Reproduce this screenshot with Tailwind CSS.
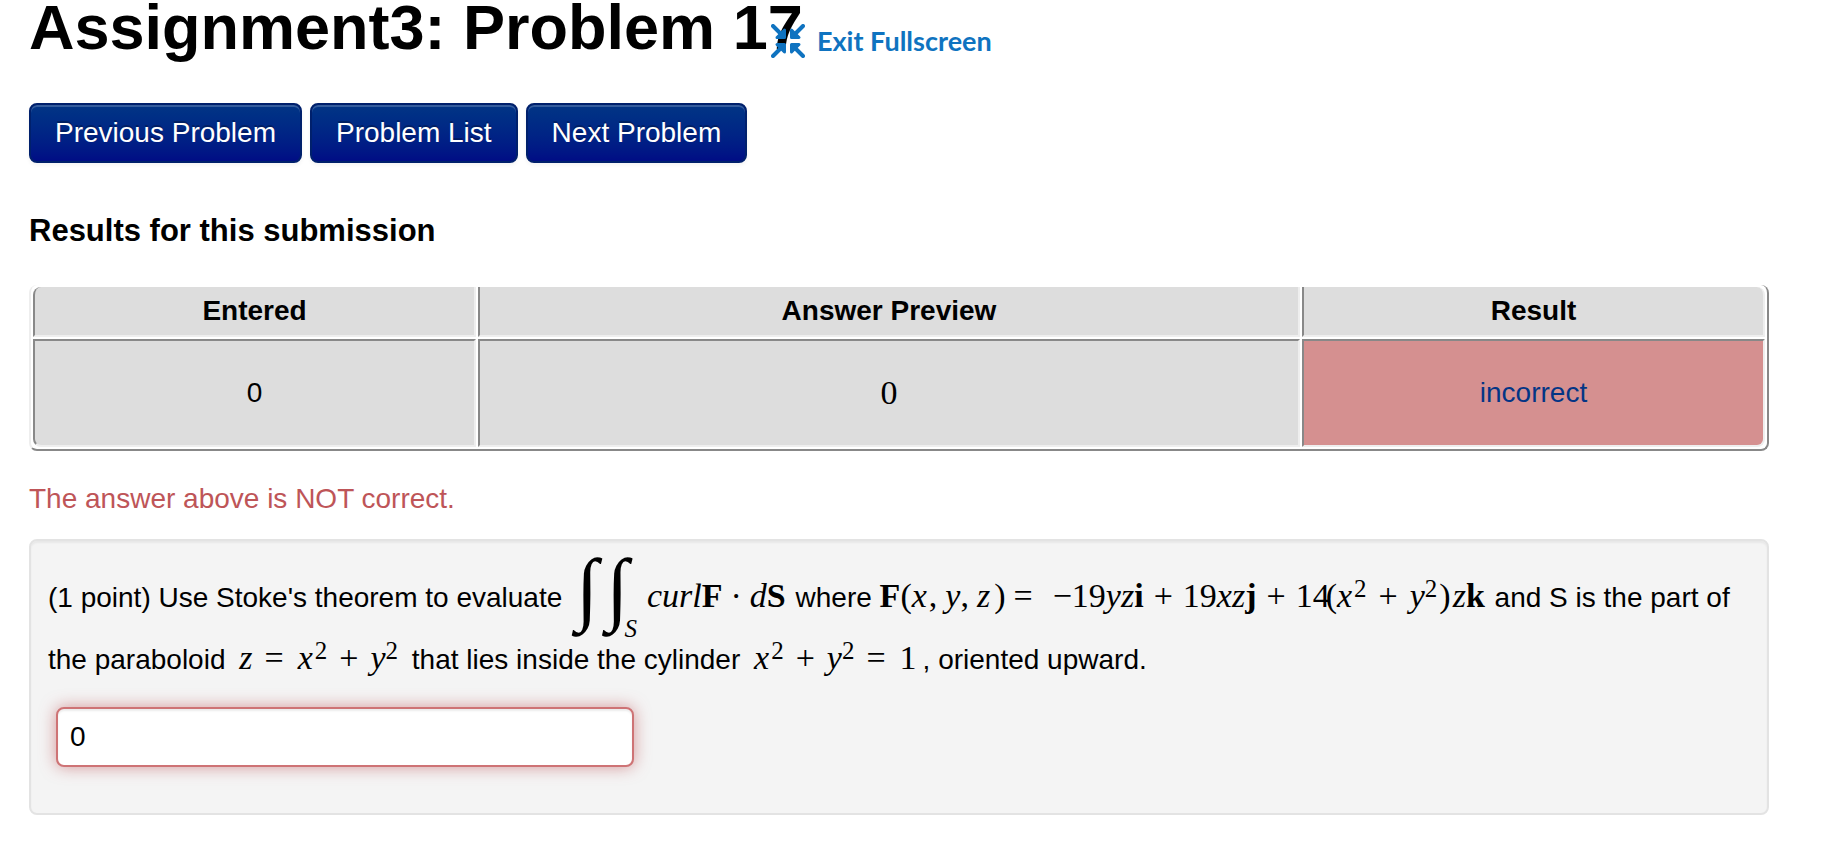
<!DOCTYPE html>
<html lang="en">
<head>
  <meta charset="UTF-8">
  <meta name="viewport" content="width=device-width, initial-scale=1">
  <title>Assignment3: Problem 17</title>
  <script src="https://cdn.jsdelivr.net/npm/@tailwindcss/browser@4"></script>
</head>
<body class="bg-white text-black text-[28px] leading-10 font-['Liberation_Sans',Arial,sans-serif] pl-[29px] pr-[61px]">

  <header class="relative">
    <h1 class="text-[63px] leading-[54px] font-bold whitespace-nowrap">Assignment3: Problem 17</h1>
    <a href="#" class="absolute left-[742px] top-6 flex items-center gap-3 text-[27px] leading-[34px] font-bold text-[#0f73c0] font-[Lato,sans-serif] whitespace-nowrap">
      <svg class="size-[34px]" viewBox="0 0 34 34" fill="currentColor" stroke="currentColor" stroke-linecap="round" stroke-linejoin="round" aria-hidden="true">
        <g id="arrow">
          <path d="M2 2 L9 9" stroke-width="4" fill="none"/>
          <path d="M13.5 6 V13.5 H6 Z" stroke-width="3"/>
        </g>
        <use href="#arrow" transform="rotate(90 17 17)"/>
        <use href="#arrow" transform="rotate(180 17 17)"/>
        <use href="#arrow" transform="rotate(270 17 17)"/>
      </svg>
      Exit Fullscreen
    </a>
  </header>

  <nav class="flex gap-2 mt-[49px] text-white">
    <button type="button" class="border-2 border-[#00206c] rounded-lg px-6 py-2 bg-linear-to-b from-[#033585] to-[#000c85] text-shadow-[0_-2px_0_rgb(0_0_0/0.25)] shadow-[inset_0_2px_0_rgb(255_255_255/0.2),0_2px_4px_rgb(0_0_0/0.05)]">Previous Problem</button>
    <button type="button" class="border-2 border-[#00206c] rounded-lg px-6 py-2 bg-linear-to-b from-[#033585] to-[#000c85] text-shadow-[0_-2px_0_rgb(0_0_0/0.25)] shadow-[inset_0_2px_0_rgb(255_255_255/0.2),0_2px_4px_rgb(0_0_0/0.05)]">Problem List</button>
    <button type="button" class="border-2 border-[#00206c] rounded-lg px-6 py-2 bg-linear-to-b from-[#033585] to-[#000c85] text-shadow-[0_-2px_0_rgb(0_0_0/0.25)] shadow-[inset_0_2px_0_rgb(255_255_255/0.2),0_2px_4px_rgb(0_0_0/0.05)]">Next Problem</button>
  </nav>

  <h2 class="mt-12 text-[31px] font-bold">Results for this submission</h2>

  <table class="mt-[34px] w-full table-fixed border-separate border-spacing-[2px] border-2 border-t-0 border-l-[#eee] border-r-[#888] border-b-[#888] rounded-lg text-center">
    <thead>
      <tr class="h-[50px]">
        <th class="w-[443px] p-0 border-2 border-t-0 border-l-[#888] border-r-[#eee] border-b-[#eee] rounded-tl-lg bg-[#ddd]">Entered</th>
        <th class="p-0 border-2 border-t-0 border-l-[#888] border-r-[#eee] border-b-[#eee] bg-[#ddd]">Answer Preview</th>
        <th class="w-[463px] p-0 border-2 border-t-0 border-l-[#888] border-r-[#eee] border-b-[#eee] rounded-tr-lg bg-[#ddd]">Result</th>
      </tr>
    </thead>
    <tbody>
      <tr class="h-[108px]">
        <td class="p-0 border-2 border-t-[#888] border-l-[#888] border-r-[#eee] border-b-[#eee] rounded-bl-lg bg-[#ddd]">0</td>
        <td class="p-0 border-2 border-t-[#888] border-l-[#888] border-r-[#eee] border-b-[#eee] bg-[#ddd] text-[34px] font-['Liberation_Serif',serif]">0</td>
        <td class="p-0 border-2 border-t-[#888] border-l-[#888] border-r-[#eee] border-b-[#eee] rounded-br-lg bg-[#d59090]"><a href="#" class="text-[#033585]">incorrect</a></td>
      </tr>
    </tbody>
  </table>

  <p class="mt-7 text-[#be5558]">The answer above is NOT correct.</p>

  <main class="mt-5 border-2 border-[#e3e3e3] rounded-lg bg-[#f4f4f4] px-[17px] pt-[26px] pb-[46px] shadow-[inset_0_2px_2px_rgb(0_0_0/0.05)]">
    <p class="leading-[62px]">
      (1 point) Use Stoke's theorem to evaluate
      <span class="inline-flex items-baseline whitespace-nowrap text-[34px] leading-none font-['Liberation_Serif',serif] ml-1.5 mr-0.5">
        <span class="relative top-2 flex gap-2 text-[81px] leading-0 italic"><span>∫</span><span>∫</span></span>
        <sub class="text-[25px] leading-0 bottom-[-30px] -ml-1 italic">S</sub>
        <i class="ml-2.5">curl</i><b>F</b>
        <span class="mx-2">·</span>
        <i>d</i><b>S</b>
      </span>
      where
      <span class="inline-flex items-baseline whitespace-nowrap text-[34px] leading-none font-['Liberation_Serif',serif] mr-0.5">
        <b>F</b>(<i class="mr-0.5">x</i>,<i class="ml-2">y</i>,<i class="ml-2 mr-1">z</i>)
        <span class="ml-2 mr-5">=</span>
        −19<i>y</i><i>z</i><b>i</b>
        <span class="mx-2.5">+</span>
        19<i>x</i><i>z</i><b>j</b>
        <span class="mx-2.5">+</span>
        14<span class="-ml-1">(</span><i class="mr-0.5">x</i><sup class="text-[25px] leading-0 top-[-10px]">2</sup>
        <span class="mx-3">+</span>
        <i>y</i><sup class="text-[25px] leading-0 top-[-10px] mr-0.5">2</sup>)<i class="ml-0.5">z</i><b>k</b>
      </span>
      and S is the part of the paraboloid
      <span class="inline-flex items-baseline whitespace-nowrap text-[34px] leading-none font-['Liberation_Serif',serif] mx-1.5">
        <i>z</i>
        <span class="ml-3 mr-3.5">=</span>
        <i class="mr-0.5">x</i><sup class="text-[25px] leading-0 top-[-10px]">2</sup>
        <span class="mx-3">+</span>
        <i>y</i><sup class="text-[25px] leading-0 top-[-10px]">2</sup>
      </span>
      that lies inside the cylinder
      <span class="inline-flex items-baseline whitespace-nowrap text-[34px] leading-none font-['Liberation_Serif',serif] mx-1.5">
        <i class="mr-0.5">x</i><sup class="text-[25px] leading-0 top-[-10px]">2</sup>
        <span class="mx-3">+</span>
        <i>y</i><sup class="text-[25px] leading-0 top-[-10px]">2</sup>
        <span class="ml-3 mr-3.5">=</span>
        1
      </span>, oriented upward.
    </p>
    <input type="text" value="0" aria-label="answer 1" class="block mt-4 ml-2 w-[578px] h-[60px] px-3 border-2 border-[#ce7375] rounded-lg bg-white outline-none shadow-[inset_0_2px_2px_rgb(0_0_0/0.075),0_0_16px_rgb(190_85_88/0.6)]">
  </main>

</body>
</html>
